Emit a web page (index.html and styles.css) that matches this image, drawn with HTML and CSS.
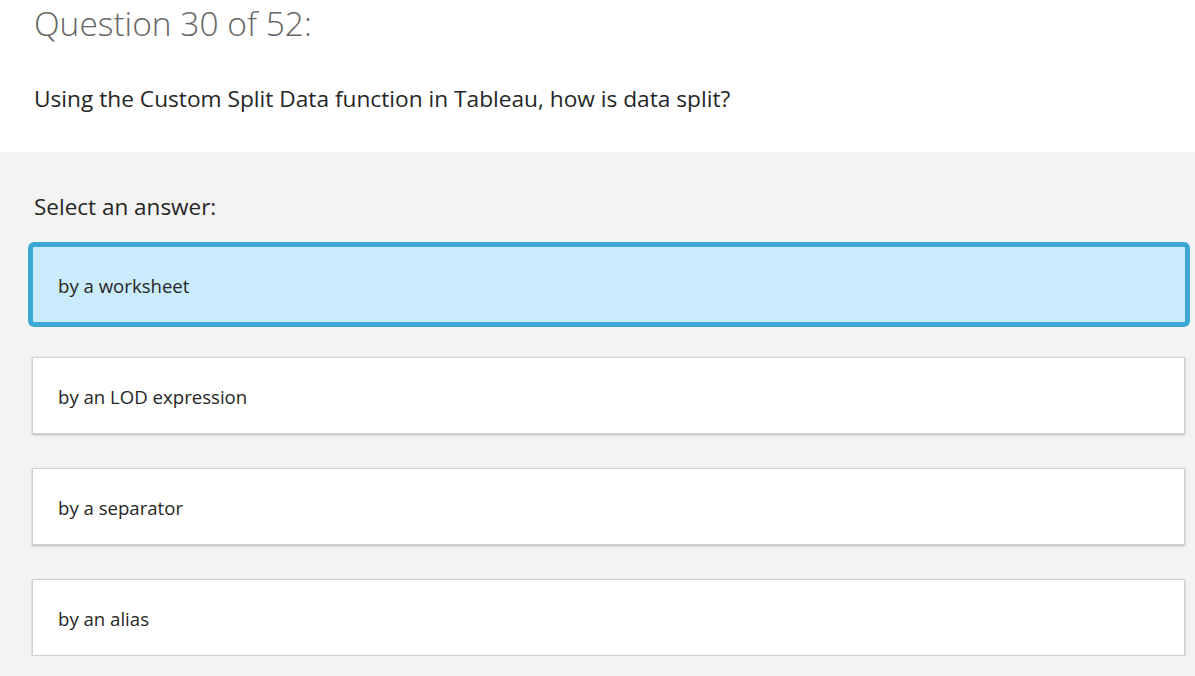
FILE: index.html
```html
<!DOCTYPE html>
<html lang="en">
<head>
  <meta charset="UTF-8">
  <title>Question 30 of 52</title>
  <link rel="stylesheet" href="styles.css">
</head>
<body>
  <div class="question-header">
    <h1 class="question-count">Question 30 of 52:</h1>
    <p class="question-text">Using the Custom Split Data function in Tableau, how is data split?</p>
  </div>

  <div class="answer-area">
    <p class="answer-label">Select an answer:</p>
    <div class="answer-list">
      <div class="answer selected">by a worksheet</div>
      <div class="answer">by an LOD expression</div>
      <div class="answer">by a separator</div>
      <div class="answer">by an alias</div>
    </div>
  </div>
</body>
</html>
```

FILE: styles.css
```css
* {
  margin: 0;
  padding: 0;
  box-sizing: border-box;
}

body {
  font-family: "Open Sans", "Noto Sans", sans-serif;
  background-color: #f3f3f3;
  color: #262626;
}

.question-header {
  background-color: #fff;
  height: 152px;
  padding: 0 34px;
}

.question-count {
  font-weight: 300;
  font-size: 33.5px;
  color: #666;
  line-height: 46px;
}

.question-text {
  font-size: 22.7px;
  margin-top: 38px;
  line-height: 30px;
}

.answer-area {
  padding: 40px 10px 0 32px;
}

.answer-label {
  font-size: 22.5px;
  line-height: 30px;
  padding-left: 2px;
}

.answer-list {
  display: flex;
  flex-direction: column;
  gap: 34px;
  margin-top: 24px;
}

.answer {
  height: 77px;
  background-color: #fff;
  border: 1px solid #d0d0d0;
  box-shadow: 0 1px 2px rgba(0, 0, 0, 0.25);
  display: flex;
  align-items: center;
  padding-left: 25px;
  padding-top: 2px;
  font-size: 18.6px;
}

.answer.selected {
  background-color: #c9ebfc;
  border: 5px solid #3aa7d7;
  border-radius: 6px;
  box-shadow: none;
  margin: -4px -5px -4px -4px;
  height: 85px;
  padding-left: 25px;
}
```
